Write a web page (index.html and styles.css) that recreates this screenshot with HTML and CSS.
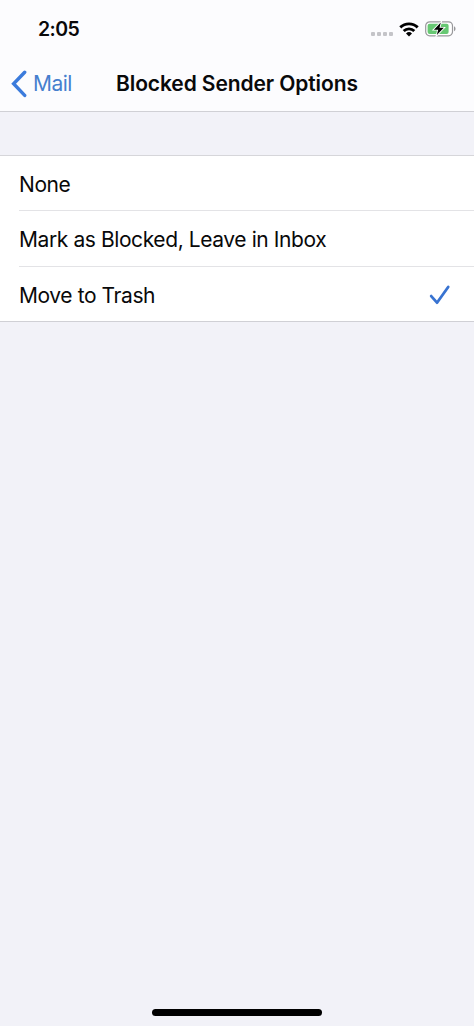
FILE: index.html
```html
<!DOCTYPE html>
<html lang="en">
<head>
<meta charset="utf-8">
<title>Blocked Sender Options</title>
<link rel="stylesheet" href="styles.css">
</head>
<body>
<div class="screen">
  <header class="header">
    <div class="status">
      <span class="time">2:05</span>
      <div class="indicators">
        <svg class="signal" width="22" height="4" viewBox="0 0 22 4" fill="#c4c4c8"><rect width="4" height="4" rx="1"/><rect x="6" width="4" height="4" rx="1"/><rect x="12" width="4" height="4" rx="1"/><rect x="18" width="4" height="4" rx="1"/></svg>
        <svg class="wifi" width="20" height="15" viewBox="0 0 20 15" fill="none" stroke="#000" stroke-width="2.9"><path d="M1.3 5.4a12.4 12.4 0 0 1 17.4 0"/><path d="M4.7 9a7.6 7.6 0 0 1 10.6 0"/><path d="M10 14.4l-3-3a4.4 4.4 0 0 1 6 0z" fill="#000" stroke="none"/></svg>
        <svg class="battery" width="32" height="16" viewBox="0 0 32 16"><rect x=".7" y=".8" width="26.8" height="14" rx="4" fill="#fff" stroke="#98989b" stroke-width="1.2"/><rect x="2.6" y="2.7" width="21" height="10.2" rx="2" fill="#67c873"/><path d="M29 5.3c2 .7 2 4.3 0 5z" fill="#98989b"/><path d="M15.8 1.6L8.9 8.7h4.3L11.8 14l7-7.2h-4.3z" fill="#000" stroke="#fff" stroke-width="1.8" paint-order="stroke"/></svg>
      </div>
    </div>
    <nav class="nav">
      <a class="back"><svg width="16" height="28" viewBox="0 0 16 28" fill="none" stroke="#3b7bdc" stroke-width="3.4" stroke-linecap="round" stroke-linejoin="miter"><path d="M13.7 2.2L2.6 13.8L13.7 25.4"/></svg><span class="back-label">Mail</span></a>
      <h1 class="title">Blocked Sender Options</h1>
    </nav>
  </header>
  <main class="options">
    <div class="row"><span class="label">None</span></div>
    <div class="row"><span class="label">Mark as Blocked, Leave in Inbox</span></div>
    <div class="row"><span class="label">Move to Trash</span><svg class="check" width="22" height="20" viewBox="0 0 22 20" fill="none" stroke="#3873d1" stroke-width="2.8" stroke-linecap="round" stroke-linejoin="round"><path d="M2.2 11.1L8 17.7L19.2 2"/></svg></div>
  </main>
  <div class="home"></div>
</div>
</body>
</html>
```
FILE: styles.css
```css
* { box-sizing: border-box; }
body { margin: 0; font-family: Inter, "Liberation Sans", sans-serif; color: #09090a; }
.screen { display: flex; flex-direction: column; width: 474px; height: 1026px; background: #f2f2f8; overflow: hidden; }
.header { height: 112px; background: #fcfcfe; border-bottom: 1px solid #d0d0d5; }
.status { height: 58px; display: flex; justify-content: space-between; padding: 0 17px 0 38px; }
.time { font-size: 19.5px; font-weight: 600; line-height: 59px; letter-spacing: -0.6px; }
.indicators { display: flex; align-items: center; height: 58px; }
.signal { margin: 10px 6px 0 0; }
.wifi { margin-right: 6px; }
.nav { height: 52px; display: flex; align-items: center; }
.back { display: flex; align-items: center; width: 116px; padding-left: 11px; gap: 6px; color: #467fce; font-size: 21px; letter-spacing: -0.55px; }
.back-label { padding-bottom: 1px; }
.title { margin: 0; font-size: 21px; font-weight: 600; line-height: 52px; letter-spacing: -0.1px; white-space: nowrap; }
.options { margin-top: 43px; border-top: 1px solid #d6d6da; border-bottom: 1px solid #d0d0d5; background: #fff; padding-left: 19px; }
.row { height: 55px; display: flex; align-items: center; justify-content: space-between; padding: 1px 23px 0 0; }
.row:first-child { height: 54px; padding-top: 2px; }
.row:nth-child(2) { height: 56px; }
.row:last-child { padding-top: 2px; }
.row + .row { border-top: 1px solid #e3e3e6; }
.label { font-size: 21px; letter-spacing: -0.41px; white-space: nowrap; }
.home { width: 170px; height: 7px; margin: auto auto 10px 152px; border-radius: 4px; background: #000; }
```
